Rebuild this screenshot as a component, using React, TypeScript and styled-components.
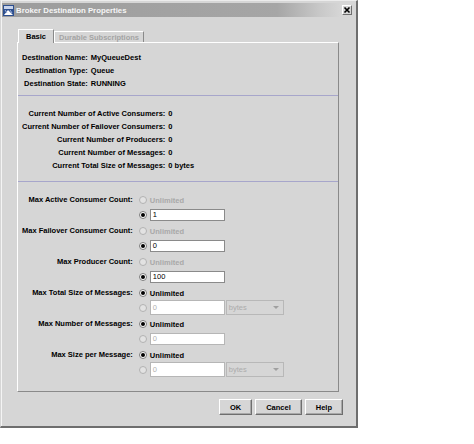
import styled, { createGlobalStyle } from "styled-components"

const info = [
    ["Destination Name:", "MyQueueDest"],
    ["Destination Type:", "Queue"],
    ["Destination State:", "RUNNING"],
]

const stats = [
    ["Current Number of Active Consumers:", "0"],
    ["Current Number of Failover Consumers:", "0"],
    ["Current Number of Producers:", "0"],
    ["Current Number of Messages:", "0"],
    ["Current Total Size of Messages:", "0 bytes"],
]

const limits = [
    { label: "Max Active Consumer Count:", unlimited: false, value: "1", unit: false },
    { label: "Max Failover Consumer Count:", unlimited: false, value: "0", unit: false },
    { label: "Max Producer Count:", unlimited: false, value: "100", unit: false },
    { label: "Max Total Size of Messages:", unlimited: true, value: "0", unit: true },
    { label: "Max Number of Messages:", unlimited: true, value: "0", unit: false },
    { label: "Max Size per Message:", unlimited: true, value: "0", unit: true },
]

const App = () => {
    return (
        <>
            <GlobalStyle />
            <Window>
                <TitleBar>
                    <svg width="11" height="11" viewBox="0 0 11 11">
                        <rect x="0" y="0" width="11" height="11" fill="#2d4f8f" />
                        <rect x="1" y="1" width="9" height="3" fill="#c8d4ec" />
                        <path d="M1 10 L5 5 L10 10 Z" fill="#ffffff" />
                        <path d="M2 5 L4 8 M7 5 L9 8" stroke="#9fb4de" strokeWidth="1" />
                    </svg>
                    <Title>Broker Destination Properties</Title>
                    <CloseBox>
                        <svg width="8" height="8" viewBox="0 0 8 8">
                            <path d="M1.5 1.5 L6.5 6.5 M6.5 1.5 L1.5 6.5" stroke="#000" strokeWidth="1.6" />
                        </svg>
                    </CloseBox>
                </TitleBar>

                <Content>
                    <TabStrip>
                        <Tab $active>Basic</Tab>
                        <Tab>Durable Subscriptions</Tab>
                    </TabStrip>

                    <Panel>
                        <InfoGrid $top={8} $bottom={5}>
                            {info.map(([k, v]) => (
                                <InfoRow key={k}>
                                    <Label>{k}</Label>
                                    <Value>{v}</Value>
                                </InfoRow>
                            ))}
                        </InfoGrid>
                        <Separator />
                        <InfoGrid $top={11} $bottom={9}>
                            {stats.map(([k, v]) => (
                                <InfoRow key={k}>
                                    <Label>{k}</Label>
                                    <Value>{v}</Value>
                                </InfoRow>
                            ))}
                        </InfoGrid>
                        <Separator />
                        <LimitGrid>
                            {limits.map((l) => (
                                <LimitRow key={l.label}>
                                    <LimitLabel>{l.label}</LimitLabel>
                                    <Options>
                                        <OptionLine>
                                            <Radio $on={l.unlimited} />
                                            <OptionText $on={l.unlimited}>Unlimited</OptionText>
                                        </OptionLine>
                                        <FieldLine>
                                            <Radio $on={!l.unlimited} />
                                            <Inputs>
                                                <Field $on={!l.unlimited} $tall={l.unit}>{l.value}</Field>
                                                {l.unit && (
                                                    <Combo>
                                                        bytes
                                                        <Arrow />
                                                    </Combo>
                                                )}
                                            </Inputs>
                                        </FieldLine>
                                    </Options>
                                </LimitRow>
                            ))}
                        </LimitGrid>
                    </Panel>
                </Content>

                <ButtonBar>
                    <Button>OK</Button>
                    <Button>Cancel</Button>
                    <Button>Help</Button>
                </ButtonBar>
            </Window>
        </>
    )
}

const GlobalStyle = createGlobalStyle`
    body {
        margin: 0;
        background: #ffffff;
        font-family: "Liberation Sans", Arial, sans-serif;
        font-size: 7.5px;
        font-weight: bold;
        color: #000;
    }
`

const Window = styled.div`
    box-sizing: border-box;
    width: 358px;
    background: #d6d6d6;
    border-top: 1px solid #ececec;
    border-left: 1px solid #d6d6d6;
    border-right: 2px solid #6e6e6e;
    border-bottom: 2px solid #6e6e6e;
    box-shadow: inset 1px 0 0 #f4f4f4;
    padding-top: 2px;
    display: flex;
    flex-direction: column;
`

const TitleBar = styled.div`
    height: 14px;
    margin: 0 1px;
    padding-left: 1px;
    display: flex;
    align-items: center;
    gap: 2px;
    font-size: 7.8px;
    background: linear-gradient(to right, #9c9c9c 0%, #a6a6a6 78%, #c8c8c8 90%, #d6d6d6 96%);
`

const Title = styled.span`
    color: #f6f6f6;
`

const CloseBox = styled.span`
    margin-left: auto;
    margin-right: 3px;
    box-sizing: border-box;
    width: 10px;
    height: 10px;
    display: flex;
    align-items: center;
    justify-content: center;
    background: #d6d6d6;
    border-top: 1px solid #fff;
    border-left: 1px solid #fff;
    border-right: 1px solid #6e6e6e;
    border-bottom: 1px solid #6e6e6e;
`

const Content = styled.div`
    padding: 12px 17px 0 16px;
`

const TabStrip = styled.div`
    display: flex;
    align-items: flex-end;
    padding-left: 1px;
`

const Tab = styled.div<{ $active?: boolean }>`
    box-sizing: border-box;
    height: ${p => p.$active ? 14 : 11}px;
    margin-bottom: ${p => p.$active ? -1 : 0}px;
    padding: ${p => p.$active ? "2px 7px 0" : "1px 4px 0"};
    background: #d6d6d6;
    color: ${p => p.$active ? "#000" : "#a4a4a4"};
    border-top: 1px solid #ffffff;
    border-left: 1px solid #ffffff;
    border-right: 1px solid #8a8a8a;
    position: relative;
    z-index: ${p => p.$active ? 1 : 0};
`

const Panel = styled.div`
    border-top: 1px solid #ffffff;
    border-left: 1px solid #ffffff;
    border-right: 1px solid #8a8a8a;
    border-bottom: 1px solid #8a8a8a;
`

const InfoGrid = styled.div<{ $top: number; $bottom: number }>`
    display: grid;
    grid-template-columns: max-content 1fr;
    grid-auto-rows: 13px;
    column-gap: 3px;
    align-items: center;
    padding: ${p => p.$top}px 4px ${p => p.$bottom}px;
`

const InfoRow = styled.div`
    display: contents;
`

const Label = styled.span`
    justify-self: end;
`

const Value = styled.span`
    justify-self: start;
`

const Separator = styled.div`
    height: 1px;
    background: #a7a6cb;
`

const LimitGrid = styled.div`
    display: grid;
    grid-template-columns: max-content max-content;
    column-gap: 6px;
    row-gap: 2px;
    padding: 11px 4px 14px;
`

const LimitRow = styled.div`
    display: contents;
`

const LimitLabel = styled.span`
    justify-self: end;
    align-self: start;
    line-height: 14px;
`

const Options = styled.div`
    display: flex;
    flex-direction: column;
`

const OptionLine = styled.div`
    height: 14px;
    display: flex;
    align-items: center;
    gap: 3px;
`

const FieldLine = styled.div`
    height: 15px;
    display: flex;
    align-items: center;
    gap: 3px;
`

const Radio = styled.span<{ $on: boolean }>`
    box-sizing: border-box;
    width: 8px;
    height: 8px;
    border-radius: 50%;
    border: 1px solid ${p => p.$on ? "#7c7c7c" : "#b2b2b2"};
    background: ${p => p.$on ? "#ffffff" : "#e2e2e2"};
    display: flex;
    align-items: center;
    justify-content: center;

    &::after {
        content: "";
        display: ${p => p.$on ? "block" : "none"};
        width: 4px;
        height: 4px;
        border-radius: 50%;
        background: #000;
    }
`

const OptionText = styled.span<{ $on: boolean }>`
    color: ${p => p.$on ? "#000" : "#a8a8a8"};
`

const Inputs = styled.div`
    display: flex;
    align-items: center;
    gap: 1px;
`

const Field = styled.div<{ $on: boolean; $tall: boolean }>`
    box-sizing: border-box;
    width: 75px;
    height: ${p => p.$tall ? 15 : 12}px;
    padding-left: 2px;
    display: flex;
    align-items: center;
    background: #ffffff;
    border: 1px solid ${p => p.$on ? "#8a8a8a" : "#b6b6b6"};
    color: ${p => p.$on ? "#000" : "#b0b0b0"};
    font-weight: normal;
`

const Combo = styled.div`
    box-sizing: border-box;
    width: 58px;
    height: 15px;
    padding: 0 4px 0 2px;
    display: flex;
    align-items: center;
    justify-content: space-between;
    border: 1px solid #b8b8b8;
    color: #acacac;
    font-weight: normal;
`

const Arrow = styled.span`
    width: 0;
    height: 0;
    border-left: 3px solid transparent;
    border-right: 3px solid transparent;
    border-top: 3px solid #a0a0a0;
`

const ButtonBar = styled.div`
    display: flex;
    justify-content: flex-end;
    gap: 3px;
    padding: 7px 13px 11px 0;
`

const Button = styled.div`
    box-sizing: border-box;
    height: 16px;
    padding: 0 10px;
    display: flex;
    align-items: center;
    background: #d6d6d6;
    border-top: 1px solid #ffffff;
    border-left: 1px solid #ffffff;
    border-right: 1px solid #6e6e6e;
    border-bottom: 1px solid #6e6e6e;
    box-shadow: inset -1px -1px 0 #a8a8a8;
`

export default App
